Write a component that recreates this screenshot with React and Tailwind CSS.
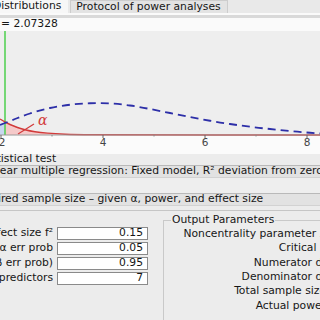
const blue = [[0,94],[10,90],[20,86],[40,79],[60,75],[80,72.5],[100,72],[120,73],[140,76],[160,80],[180,84],[200,88],[220,91.5],[240,94.5],[260,97],[280,99],[300,101],[320,102.5]]
const red = [[0,88],[5,91],[10,93.5],[15,95.5],[20,97.5],[30,100],[40,101.5],[55,102.8],[75,103.6],[110,104],[320,104]]

function smooth(pts) {
  let d = `M${pts[0][0]},${pts[0][1]}`
  for (let i = 1; i < pts.length - 1; i++) {
    const [x, y] = pts[i]
    const mx = (x + pts[i + 1][0]) / 2
    const my = (y + pts[i + 1][1]) / 2
    d += ` Q${x},${y} ${mx},${my}`
  }
  const last = pts[pts.length - 1]
  return d + ` L${last[0]},${last[1]}`
}

const inputs = [
  ['Effect size f²', '0.15'],
  ['α err prob', '0.05'],
  ['Power (1-β err prob)', '0.95'],
  ['Number of predictors', '7'],
]

const outputs = [
  'Noncentrality parameter λ',
  'Critical F',
  'Numerator df',
  'Denominator df',
  'Total sample size',
  'Actual power',
]

const Plot = () => {
  const pink = smooth(red.slice(1)) + ' L5,104 Z'
  return (
    <svg width="320" height="123" className="block">
      <rect x="0" y="0" width="320" height="104" fill="#eeeeee" />
      <rect x="0" y="104" width="320" height="19" fill="#fbfbfb" />
      <path d={pink} fill="#f5c9c9" />
      <path d="M0,94 Q2.5,93 5,92 L5,104 L0,104 Z" fill="#c9d6ef" />
      <line x1="5" y1="0" x2="5" y2="104" stroke="#4ccf4c" strokeWidth="1.5" />
      <path d={smooth(red)} fill="none" stroke="#d23a3a" strokeWidth="1.4" />
      <path d={smooth(blue)} fill="none" stroke="#2d2fa8" strokeWidth="1.8" strokeDasharray="8 5" />
      <line x1="18" y1="103" x2="34" y2="93" stroke="#d23a3a" strokeWidth="1.2" />
      <text x="38" y="94" fontSize="14" fill="#d23a3a" fontFamily="DejaVu Serif, serif" fontStyle="italic">α</text>
      <line x1="0" y1="104" x2="320" y2="104" stroke="#9a9a9a" strokeWidth="1" />
      {[1, 103, 205, 307].map(x => (
        <line key={x} x1={x} y1="104" x2={x} y2="107" stroke="#666" />
      ))}
      {[52, 154, 256].map(x => (
        <line key={x} x1={x} y1="104" x2={x} y2="105.5" stroke="#888" />
      ))}
      {[['2', 2], ['4', 103], ['6', 205], ['8', 307]].map(([t, x]) => (
        <text key={t} x={x} y="115" fontSize="10.5" fill="#444" textAnchor="middle" fontFamily="DejaVu Sans, sans-serif">{t}</text>
      ))}
    </svg>
  )
}

const App = () => {
  return (
    <div className="w-[320px] h-[320px] overflow-hidden bg-[#ececec] font-['DejaVu_Sans',sans-serif] text-[10.75px] text-[#161616] leading-none">
      {/* tabs */}
      <div className="flex h-[13px] bg-[#e9e9e9]">
        <div className="ml-[-12px] pl-[5px] pr-[7px] bg-[#f7f7f7] flex items-center whitespace-nowrap">Distributions</div>
        <div className="ml-[2px] pl-[5px] pr-[6px] bg-[#e3e3e3] border-x border-t border-[#cdcdcd] flex items-center whitespace-nowrap">Protocol of power analyses</div>
      </div>
      <div className="h-[2px] bg-[#fafafa]" />
      <div className="h-[3px] bg-[#d9d9d9]" />
      <div className="h-[13px] bg-[#fafafa] flex items-center pl-[1px] whitespace-nowrap">= 2.07328</div>

      <Plot />

      {/* test selection */}
      <div className="h-[11px] flex items-center whitespace-nowrap ml-[-21px]">Statistical test</div>
      <div className="h-[13px] bg-[#e2e2e2] border-t border-b border-t-[#b9b9b9] border-b-[#d2d2d2] flex items-center whitespace-nowrap overflow-hidden">
        <span className="ml-[-16px]">Linear multiple regression: Fixed model, R² deviation from zero</span>
      </div>
      <div className="h-[15px] bg-[#eeeeee]" />
      <div className="h-[13px] bg-[#e2e2e2] border-t border-b border-t-[#b9b9b9] border-b-[#d2d2d2] flex items-center whitespace-nowrap overflow-hidden">
        <span className="ml-[-125px]">A priori: Compute required sample size – given α, power, and effect size</span>
      </div>
      <div className="h-[4px]" />

      {/* parameters */}
      <div className="flex border-t border-[#c6c6c6] h-[110px]">
        <div className="w-[160px] shrink-0 pt-[16px] flex flex-col gap-[2px]">
          {inputs.map(([label, value]) => (
            <div key={label} className="flex items-center h-[13px]">
              <div className="w-[53px] flex justify-end overflow-hidden whitespace-nowrap">{label}</div>
              <div className="ml-[4px] w-[91px] h-[13px] bg-white border border-[#8a8a8a] flex items-center justify-end pr-[4px]">{value}</div>
            </div>
          ))}
        </div>
        <div className="relative ml-[3px] mt-[9px] w-[163px] shrink-0 border-l border-t border-[#c9c9c9] pt-[6px]">
          <div className="absolute left-[7px] top-[-6px] bg-[#ececec] px-[1px] whitespace-nowrap">Output Parameters</div>
          {outputs.map(label => (
            <div key={label} className="h-[14.4px] flex items-center justify-end whitespace-nowrap">{label}</div>
          ))}
        </div>
      </div>
    </div>
  )
}

export default App
